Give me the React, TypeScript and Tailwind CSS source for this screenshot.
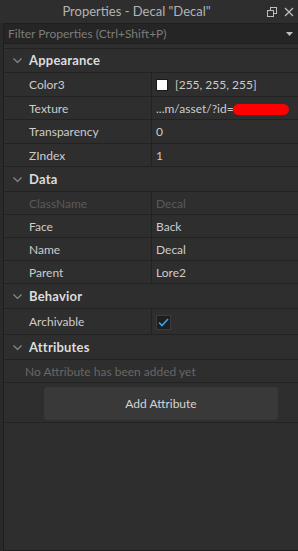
import React from "react";

type Prop = {
  name: string;
  value: React.ReactNode;
  h: string;
  disabled?: boolean;
};

function Chevron() {
  return (
    <svg width="9" height="6" viewBox="0 0 9 6" className="shrink-0">
      <polyline points="0.5,0.5 4.5,4.5 8.5,0.5" fill="none" stroke="#8a8a8a" strokeWidth="1.2" />
    </svg>
  );
}

function Header({ title, h }: { title: string; h: string }) {
  return (
    <div className={`flex items-center border-b border-[#222222] pt-[1px] ${h}`}>
      <div className="w-[25px] flex justify-center pl-[2px]">
        <Chevron />
      </div>
      <span className="font-bold text-[13px] text-[#dcdcdc] tracking-[0.2px]">{title}</span>
    </div>
  );
}

function Row({ name, value, h, disabled }: Prop) {
  const color = disabled ? "text-[#5a5a5a]" : "text-[#cccccc]";
  return (
    <div className={`flex border-b border-[#222222] text-[12px] ${h}`}>
      <div className={`w-[148px] shrink-0 flex items-center pt-[1px] pl-[25px] border-r border-[#222222] ${color}`}>
        {name}
      </div>
      <div className={`flex-1 flex items-center pt-[1px] pl-[4px] ${color}`}>{value}</div>
    </div>
  );
}

export default function App() {
  return (
    <div
      className="w-[298px] h-[551px] bg-[#2e2e2e] flex flex-col overflow-hidden"
      style={{ fontFamily: "Lato, 'Noto Sans', sans-serif" }}
    >
      {/* title bar */}
      <div className="h-[23px] flex items-center shrink-0">
        <div className="flex-1 text-center text-[13px] text-[#b4b4b4] pl-[6px]">
          Properties - Decal "Decal"
        </div>
        <div className="flex items-center gap-[7px] pr-[4px]">
          <svg width="10" height="10" viewBox="0 0 10 10">
            <rect x="3.5" y="0.5" width="6" height="6" fill="none" stroke="#bdbdbd" />
            <rect x="0.5" y="3.5" width="6" height="6" fill="#2e2e2e" stroke="#bdbdbd" />
          </svg>
          <svg width="10" height="10" viewBox="0 0 10 10">
            <path d="M1 1 L9 9 M9 1 L1 9" stroke="#bdbdbd" strokeWidth="1.3" />
          </svg>
        </div>
      </div>

      <div className="flex-1 flex flex-col pl-[3px] bg-[#2a2a2a]">
        <div className="flex-1 flex flex-col border-l border-b border-[#1e1e1e] bg-[#2e2e2e]">
          {/* filter */}
          <div className="h-[21px] shrink-0 flex items-center bg-[#252525] border-y border-[#1f1f1f] pl-[4px] pr-[5px]">
            <span className="flex-1 text-[12px] text-[#7c7c7c]">Filter Properties (Ctrl+Shift+P)</span>
            <svg width="7" height="4" viewBox="0 0 7 4">
              <polygon points="0,0 7,0 3.5,4" fill="#bdbdbd" />
            </svg>
          </div>
          <div className="h-[5px] shrink-0 border-b border-[#222222]" />

          <Header title="Appearance" h="h-[24px]" />
          <Row
            name="Color3"
            h="h-[24px]"
            value={
              <span className="flex items-center gap-[7px]">
                <span className="w-[12px] h-[12px] bg-white border border-[#1a1a1a]" />
                <span>[255, 255, 255]</span>
              </span>
            }
          />
          <Row
            name="Texture"
            h="h-[23px]"
            value={
              <span className="flex items-center">
                <span>...m/asset/?id=</span>
                <span className="w-[56px] h-[11px] bg-[#ff0000] rounded-[6px] -ml-[1px] mt-[2px]" />
              </span>
            }
          />
          <Row name="Transparency" h="h-[24px]" value="0" />
          <Row name="ZIndex" h="h-[23px]" value="1" />

          <Header title="Data" h="h-[25px]" />
          <Row name="ClassName" h="h-[23px]" value="Decal" disabled />
          <Row name="Face" h="h-[23px]" value="Back" />
          <Row name="Name" h="h-[23px]" value="Decal" />
          <Row name="Parent" h="h-[23px]" value="Lore2" />

          <Header title="Behavior" h="h-[25px]" />
          <Row
            name="Archivable"
            h="h-[26px]"
            value={
              <span className="w-[15px] h-[15px] bg-[#1e1e1e] border border-[#3c3c3c] flex items-center justify-center">
                <svg width="11" height="9" viewBox="0 0 11 9">
                  <polyline points="1,4.5 4,7.5 10,1" fill="none" stroke="#35a4f4" strokeWidth="1.6" />
                </svg>
              </span>
            }
          />

          <Header title="Attributes" h="h-[25px]" />
          <div className="h-[23px] flex items-center pt-[1px] pl-[21px] border-b border-[#222222] text-[12px] text-[#666666]">
            No Attribute has been added yet
          </div>
          <div className="h-[40px] flex items-start pt-[4px] pl-[40px] pr-[20px] border-b border-[#222222]">
            <div className="flex-1 h-[33px] bg-[#393939] rounded-[4px] flex items-center justify-center text-[12px] text-[#d4d4d4]">
              Add Attribute
            </div>
          </div>
          <div className="flex-1" />
        </div>
      </div>
    </div>
  );
}
